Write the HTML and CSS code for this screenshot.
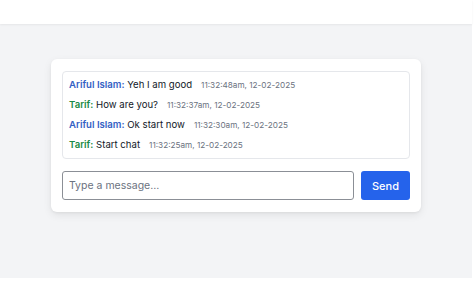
FILE: index.html
```
<!DOCTYPE html>
<html>
<head>
<meta charset="utf-8">
<link rel="stylesheet" href="styles.css">
</head>
<body>
<div class="frame">
  <header class="topbar"></header>
  <main class="page">
    <div class="card">
      <div class="messages">
        <div class="msg"><span class="name blue">Ariful Islam:</span> <span class="text">Yeh I am good</span><span class="time">11:32:48am, 12-02-2025</span></div>
        <div class="msg"><span class="name green">Tarif:</span> <span class="text">How are you?</span><span class="time">11:32:37am, 12-02-2025</span></div>
        <div class="msg"><span class="name blue">Ariful Islam:</span> <span class="text">Ok start now</span><span class="time">11:32:30am, 12-02-2025</span></div>
        <div class="msg"><span class="name green">Tarif:</span> <span class="text">Start chat</span><span class="time">11:32:25am, 12-02-2025</span></div>
      </div>
      <div class="composer">
        <input class="input" type="text" placeholder="Type a message...">
        <button class="send">Send</button>
      </div>
    </div>
  </main>
</div>
</body>
</html>
```
FILE: styles.css
```
* { box-sizing: border-box; }
html, body { margin: 0; padding: 0; background: #ffffff; }
body { font-family: Inter, "Noto Sans", sans-serif; width: 474px; height: 281px; overflow: hidden; }
.frame { width: 472px; }
.topbar { height: 24px; background: #ffffff; box-shadow: 0 1px 2px rgba(0,0,0,0.06); position: relative; z-index: 1; }
.page { height: 254px; background: #f3f4f6; display: flex; justify-content: center; padding-top: 35px; }
.card { width: 370px; height: 153px; background: #ffffff; border-radius: 6px; box-shadow: 0 3px 8px rgba(0,0,0,0.08), 0 1px 3px rgba(0,0,0,0.05); padding: 12px 11px 12px 11px; display: flex; flex-direction: column; }
.messages { height: 88px; border: 1px solid #e5e7eb; border-radius: 4px; padding: 3px 6px; display: flex; flex-direction: column; }
.msg { height: 20px; line-height: 20px; font-size: 9.6px; color: #111827; white-space: nowrap; }
.name { font-weight: 600; }
.blue { color: #3461c4; }
.green { color: #1a8a45; }
.time { font-size: 8.2px; color: #6b7280; margin-left: 9px; }
.composer { display: flex; gap: 7px; margin-top: 12px; height: 29px; }
.input { flex: 1; height: 29px; border: 1px solid #8b8f96; border-radius: 3px; padding: 0 6px; font-family: Inter, "Noto Sans", sans-serif; font-size: 10.5px; color: #111827; outline: none; }
.input::placeholder { color: #6b7280; }
.send { width: 49px; height: 29px; border: none; border-radius: 3px; background: #2563eb; color: #ffffff; font-family: Inter, "Noto Sans", sans-serif; font-size: 11px; font-weight: 500; padding: 0; }
```
